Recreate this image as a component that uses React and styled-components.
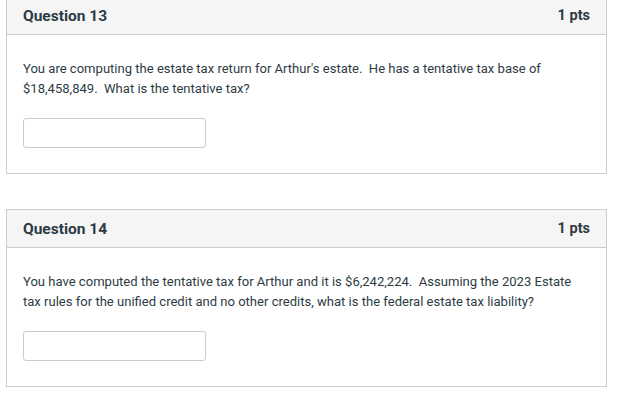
import React from 'react';
import styled, { createGlobalStyle } from 'styled-components';

const GlobalStyle = createGlobalStyle`
  html, body {
    margin: 0;
    padding: 0;
    background: #ffffff;
  }
  body {
    font-family: Roboto, "Liberation Sans", Arial, sans-serif;
    color: #2d3b45;
  }
`;

const questions = [
  {
    id: 13,
    points: 1,
    text: "You are computing the estate tax return for Arthur's estate.\u00a0 He has a tentative tax base of $18,458,849.\u00a0 What is the tentative tax?",
  },
  {
    id: 14,
    points: 1,
    text: 'You have computed the tentative tax for Arthur and it is $6,242,224.\u00a0 Assuming the 2023 Estate tax rules for the unified credit and no other credits, what is the federal estate tax liability?',
  },
];

const Page = styled.div`
  display: flex;
  flex-direction: column;
  gap: 35px;
  padding: 0 33px 0 6px;
  margin-top: -4px;
`;

const Card = styled.div`
  border: 1px solid #c7cdd1;
  background: #ffffff;
`;

const Header = styled.div`
  height: 37px;
  display: flex;
  align-items: center;
  justify-content: space-between;
  padding: 0 16px 0 16px;
  background: #f5f5f5;
  border-bottom: 1px solid #c7cdd1;
`;

const Title = styled.h2`
  margin: 0;
  font-size: 15.5px;
  font-weight: 700;
  color: #2d3b45;
`;

const Points = styled.span`
  font-size: 14.5px;
  font-weight: 700;
  color: #2d3b45;
`;

const Body = styled.div`
  padding: 24px 16px 25px;
`;

const Text = styled.p`
  margin: 0 0 19px;
  font-size: 13.05px;
  line-height: 20px;
  max-width: 560px;
`;

const AnswerInput = styled.input`
  display: block;
  box-sizing: border-box;
  width: 183px;
  height: 30px;
  border: 1px solid #c7cdd1;
  border-radius: 3px;
  background: #ffffff;
  padding: 0 8px;
  font: inherit;
`;

export default function App() {
  return (
    <>
      <GlobalStyle />
      <Page>
        {questions.map((q) => (
          <Card key={q.id}>
            <Header>
              <Title>Question {q.id}</Title>
              <Points>{q.points} pts</Points>
            </Header>
            <Body>
              <Text>{q.text}</Text>
              <AnswerInput type="text" aria-label={`Answer for question ${q.id}`} />
            </Body>
          </Card>
        ))}
      </Page>
    </>
  );
}
